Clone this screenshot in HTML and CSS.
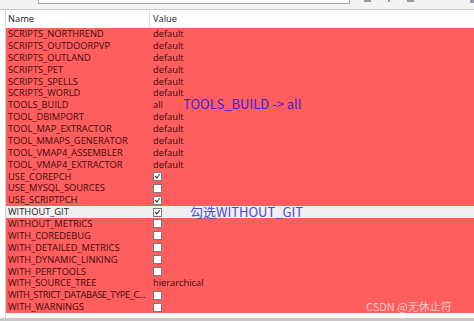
FILE: index.html
```html
<!DOCTYPE html>
<html lang="zh-CN">
<head>
    <meta charset="UTF-8">
    <title>CMake Cache</title>
    <link rel="stylesheet" href="styles.css">
</head>
<body>
    <div class="toolbar">
        <div class="search-box"></div>
        <div class="tool-icons">
            <span class="tool-icon"></span>
            <span class="tool-icon small"></span>
            <span class="tool-icon"></span>
        </div>
        <span class="tool-icon corner"></span>
    </div>

    <div class="cache-table">
        <div class="row head">
            <div class="cell name">Name</div>
            <div class="cell value">Value</div>
        </div>
        <div class="row"><div class="cell name">SCRIPTS_NORTHREND</div><div class="cell value">default</div></div>
        <div class="row"><div class="cell name">SCRIPTS_OUTDOORPVP</div><div class="cell value">default</div></div>
        <div class="row"><div class="cell name">SCRIPTS_OUTLAND</div><div class="cell value">default</div></div>
        <div class="row"><div class="cell name">SCRIPTS_PET</div><div class="cell value">default</div></div>
        <div class="row"><div class="cell name">SCRIPTS_SPELLS</div><div class="cell value">default</div></div>
        <div class="row"><div class="cell name">SCRIPTS_WORLD</div><div class="cell value">default</div></div>
        <div class="row"><div class="cell name">TOOLS_BUILD</div><div class="cell value">all</div></div>
        <div class="row"><div class="cell name">TOOL_DBIMPORT</div><div class="cell value">default</div></div>
        <div class="row"><div class="cell name">TOOL_MAP_EXTRACTOR</div><div class="cell value">default</div></div>
        <div class="row"><div class="cell name">TOOL_MMAPS_GENERATOR</div><div class="cell value">default</div></div>
        <div class="row"><div class="cell name">TOOL_VMAP4_ASSEMBLER</div><div class="cell value">default</div></div>
        <div class="row"><div class="cell name">TOOL_VMAP4_EXTRACTOR</div><div class="cell value">default</div></div>
        <div class="row"><div class="cell name">USE_COREPCH</div><div class="cell value"><span class="check on"></span></div></div>
        <div class="row"><div class="cell name">USE_MYSQL_SOURCES</div><div class="cell value"><span class="check"></span></div></div>
        <div class="row"><div class="cell name">USE_SCRIPTPCH</div><div class="cell value"><span class="check on"></span></div></div>
        <div class="row selected"><div class="cell name">WITHOUT_GIT</div><div class="cell value"><span class="check on"></span></div></div>
        <div class="row"><div class="cell name">WITHOUT_METRICS</div><div class="cell value"><span class="check"></span></div></div>
        <div class="row"><div class="cell name">WITH_COREDEBUG</div><div class="cell value"><span class="check"></span></div></div>
        <div class="row"><div class="cell name">WITH_DETAILED_METRICS</div><div class="cell value"><span class="check"></span></div></div>
        <div class="row"><div class="cell name">WITH_DYNAMIC_LINKING</div><div class="cell value"><span class="check"></span></div></div>
        <div class="row"><div class="cell name">WITH_PERFTOOLS</div><div class="cell value"><span class="check"></span></div></div>
        <div class="row"><div class="cell name">WITH_SOURCE_TREE</div><div class="cell value">hierarchical</div></div>
        <div class="row"><div class="cell name tight">WITH_STRICT_DATABASE_TYPE_C...</div><div class="cell value"><span class="check"></span></div></div>
        <div class="row"><div class="cell name">WITH_WARNINGS</div><div class="cell value"><span class="check"></span></div></div>
        <div class="table-foot"></div>
    </div>
    <div class="bottom-edge"></div>

    <!-- annotations drawn over the screenshot -->
    <div class="note note-build">TOOLS_BUILD -&gt; all</div>
    <div class="note note-git">勾选WITHOUT_GIT</div>
    <div class="watermark">CSDN @无休止符</div>
</body>
</html>
```

FILE: styles.css
```css
body {
    margin: 0;
    width: 474px;
    height: 321px;
    overflow: hidden;
    position: relative;
    background: #fff;
    font-family: 'Open Sans', 'Noto Sans', sans-serif;
}

.toolbar {
    height: 10px;
    box-sizing: border-box;
    background: #f2f2f2;
    border-bottom: 1px solid #c9c9c9;
    display: flex;
    align-items: flex-start;
}

.search-box {
    margin-left: 38px;
    width: 310px;
    height: 3px;
    background: #fff;
    border: 1px solid #a9a9a9;
    border-top: none;
}

.tool-icons {
    display: flex;
    gap: 17px;
    margin-left: 14px;
}

.tool-icon {
    width: 7px;
    height: 2px;
    background: #9a9a9a;
}

.tool-icon.small {
    width: 2px;
}

.tool-icon.corner {
    margin-left: auto;
    width: 4px;
    height: 3px;
    background: #8c9fc0;
}

.cache-table {
    margin-left: 5px;
    border-left: 1px solid #d0d0d0;
}

.row {
    display: flex;
    height: 11.875px;
    background: #ff5e5e;
    color: #3c0a0a;
    font-size: 9.3px;
    line-height: 11.875px;
}

.row.head {
    height: 18px;
    line-height: 18px;
    background: #fff;
    color: #222;
}

.row.selected {
    background: #f0f0f0;
    color: #222;
}

.cell {
    white-space: nowrap;
    overflow: hidden;
}

.cell.name {
    width: 142px;
    padding-left: 2px;
}

/* the long name only just fits in the column */
.cell.name.tight {
    letter-spacing: -0.4px;
}

.row.head .cell.name {
    border-right: 1px solid #e2e2e2;
    width: 141px;
}

.cell.value {
    padding-left: 3px;
    display: flex;
    align-items: center;
}

.check {
    display: inline-block;
    box-sizing: border-box;
    width: 9px;
    height: 9px;
    background: #fff;
    border: 1px solid #7a7a7a;
    position: relative;
}

.check.on::after {
    content: "";
    position: absolute;
    left: 2px;
    top: 0;
    width: 2px;
    height: 4px;
    border-right: 1px solid #333;
    border-bottom: 1px solid #333;
    transform: rotate(40deg);
}

.table-foot {
    height: 5px;
    background: #fff;
}

.bottom-edge {
    height: 3px;
    background: #c8c8c8;
}

.note {
    position: absolute;
    font-family: 'Noto Sans CJK SC', 'Noto Sans', sans-serif;
    font-size: 13px;
    color: #3a22d8;
    white-space: nowrap;
}

.note-build {
    left: 183px;
    top: 94px;
}

.note-git {
    left: 190px;
    top: 202px;
    color: #4a46e0;
}

.watermark {
    position: absolute;
    left: 366px;
    top: 298px;
    font-family: 'Noto Sans CJK SC', 'Noto Sans', sans-serif;
    font-size: 11px;
    color: rgba(235, 235, 235, 0.75);
    white-space: nowrap;
}
```
